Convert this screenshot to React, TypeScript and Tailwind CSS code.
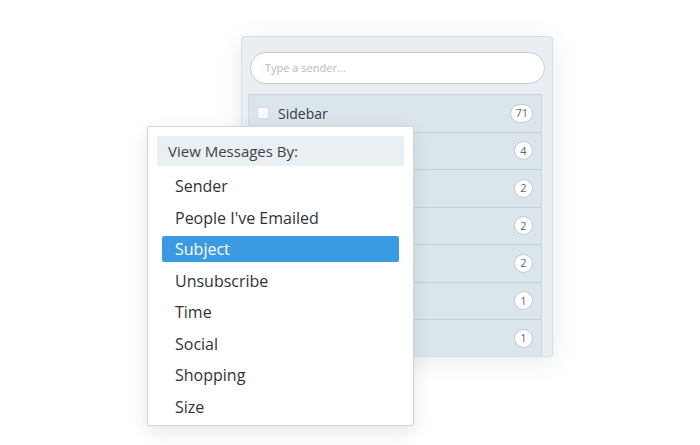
import React from 'react';

const counts = [71, 4, 2, 2, 2, 1, 1];

const options = ['Sender', "People I've Emailed", 'Subject', 'Unsubscribe', 'Time', 'Social', 'Shopping', 'Size'];

const SenderPanel: React.FC = () => (
  <div className="ml-[241px] w-[312px] h-[321px] overflow-hidden rounded-[3px] border border-[#d7e0e6] bg-[#e8eef2] shadow-[0_4px_24px_rgba(60,80,100,0.12)]">
    <div className="pl-[8px] pr-[7px] pt-[15px]">
      <div className="flex h-[32px] items-center rounded-full border border-[#c4ccd2] bg-white px-[14px]">
        <span className="text-[11px] text-[#b3b9be]">Type a sender...</span>
      </div>
    </div>
    <div className="ml-[6px] mr-[10px] mt-[10px] border-l border-r border-[#cfd9e0]">
      {counts.map((count, i) => (
        <div
          key={i}
          className="flex h-[37.5px] items-center border-t border-[#c6d1d9] bg-[#dbe5ec] pl-[8px] pr-[8px]"
        >
          {i === 0 && (
            <>
              <div className="h-[12px] w-[12px] rounded-[2px] border border-[#d3dbe0] bg-[#f7f9fa]" />
              <span className="ml-[9px] text-[14px] text-[#333a40]">Sidebar</span>
            </>
          )}
          <div className="ml-auto flex h-[19px] min-w-[19px] items-center justify-center rounded-full border border-[#bfcad2] bg-white px-[4px] text-[11px] text-[#5c6670]">
            {count}
          </div>
        </div>
      ))}
    </div>
  </div>
);

const ViewMenu: React.FC = () => (
  <div className="absolute left-[147px] top-[126px] w-[267px] h-[300px] rounded-[2px] border border-[#d3d6d9] bg-white shadow-[0_6px_18px_rgba(40,50,60,0.12)]">
    <div className="mx-[9px] mt-[9px] flex h-[30px] items-center rounded-[2px] bg-[#e9eff3] pl-[11px] text-[15px] text-[#3c4247]">
      View Messages By:
    </div>
    <div className="mx-[14px] mt-[7px] flex flex-col gap-[5.5px]">
      {options.map(opt => (
        <div
          key={opt}
          className={
            opt === 'Subject'
              ? 'flex h-[26px] items-center rounded-[2px] bg-[#3a9be2] pl-[13px] text-[16px] text-white'
              : 'flex h-[26px] items-center pl-[13px] text-[16px] text-[#2f3438]'
          }
        >
          {opt}
        </div>
      ))}
    </div>
  </div>
);

export default function App() {
  return (
    <div
      className="relative h-[445px] w-[700px] overflow-hidden bg-white pt-[36px]"
      style={{ fontFamily: '"Open Sans", "Noto Sans", sans-serif' }}
    >
      <SenderPanel />
      <ViewMenu />
    </div>
  );
}
